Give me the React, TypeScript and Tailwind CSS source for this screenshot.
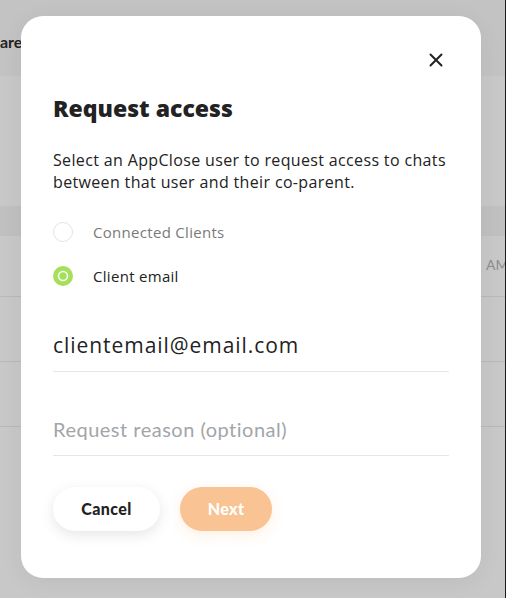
import React from "react";

export default function App() {
  return (
    <div className="relative w-[506px] h-[598px] overflow-hidden bg-[#c8c8c8]" style={{ fontFamily: "Lato, 'Noto Sans', sans-serif" }}>
      {/* background page under overlay */}
      <div className="flex flex-col w-[505px]">
        <div className="h-[76px] bg-[#c3c3c3] pt-[31px]">
          <div className="text-[16px] leading-[22px] font-bold text-[#232323] whitespace-nowrap">are</div>
        </div>
        <div className="h-[130px]" />
        <div className="h-[30px] bg-[#c0c0c0]" />
        <div className="h-[60px] flex justify-end items-start pt-[20px] overflow-hidden">
          <span className="text-[14px] leading-[18px] text-[#8e8e8e] w-[19px] overflow-hidden whitespace-nowrap">AM</span>
        </div>
        <div className="h-[65px] border-t border-[#b8b8b8]" />
        <div className="h-[65px] border-t border-[#b8b8b8]" />
        <div className="h-[10px] border-t border-[#b8b8b8]" />
      </div>
      <div className="absolute top-0 right-0 w-[1px] h-full bg-[#1c1c1c]" />

      {/* modal */}
      <div className="absolute left-[21px] top-[16px] w-[460px] h-[562px] rounded-[22px] bg-white px-[32px] pt-[37px] shadow-[0_4px_24px_rgba(0,0,0,0.06)]">
        <div className="flex justify-end pr-[6px]">
          <svg width="14" height="14" viewBox="0 0 14 14">
            <path d="M1.5 1.5 L12.5 12.5 M12.5 1.5 L1.5 12.5" stroke="#222" strokeWidth="2" strokeLinecap="round" />
          </svg>
        </div>
        <h2 className="mt-[27px] text-[23px] leading-[28px] font-extrabold text-[#222]" style={{ fontFamily: "'Open Sans', sans-serif" }}>Request access</h2>
        <p className="mt-[27px] text-[16px] leading-[22px] text-[#222] whitespace-nowrap tracking-[0.35px]" style={{ fontFamily: "'Open Sans', sans-serif" }}>
          Select an AppClose user to request access to chats
          <br />
          between that user and their co-parent.
        </p>
        <div className="mt-[29px] flex items-center h-[20px]">
          <svg width="20" height="20" viewBox="0 0 20 20">
            <circle cx="10" cy="10" r="9.5" fill="#fff" stroke="#e2e2e2" strokeWidth="1" />
          </svg>
          <span className="ml-[20px] text-[15px] leading-[20px] text-[#7a7a7a] tracking-[0.3px]" style={{ fontFamily: "'Open Sans', sans-serif" }}>Connected Clients</span>
        </div>
        <div className="mt-[24px] flex items-center h-[20px]">
          <svg width="20" height="20" viewBox="0 0 20 20">
            <circle cx="10" cy="10" r="10" fill="#a6e05a" />
            <circle cx="10" cy="10" r="4.5" fill="none" stroke="#fff" strokeWidth="1.5" />
          </svg>
          <span className="ml-[20px] text-[15px] leading-[20px] text-[#222] tracking-[0.3px]" style={{ fontFamily: "'Open Sans', sans-serif" }}>Client email</span>
        </div>
        <div className="mt-[45px] pb-[12px] border-b border-[#e6e6e6]">
          <div className="text-[21px] leading-[28px] text-[#222] tracking-[0.95px]" style={{ fontFamily: "'Open Sans', sans-serif" }}>clientemail@email.com</div>
        </div>
        <div className="mt-[43px] pb-[12px] border-b border-[#e6e6e6]">
          <div className="text-[20px] leading-[28px] text-[#a2a5a9] tracking-[0.5px]">Request reason (optional)</div>
        </div>
        <div className="mt-[31px] flex gap-[20px]">
          <button className="w-[107px] h-[44px] rounded-full bg-white text-[16px] font-black tracking-[0.4px] text-[#222] shadow-[0_4px_14px_rgba(0,0,0,0.1)]">Cancel</button>
          <button className="w-[92px] h-[44px] rounded-full bg-[#f9c393] text-[16px] font-black tracking-[0.4px] text-white shadow-[0_4px_14px_rgba(249,195,147,0.25)]">Next</button>
        </div>
      </div>
    </div>
  );
}
